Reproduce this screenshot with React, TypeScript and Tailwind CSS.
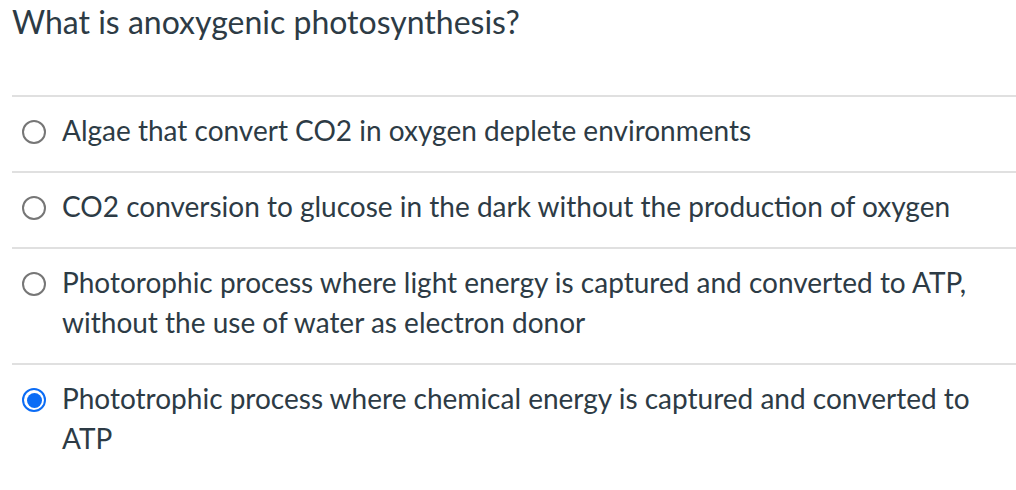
import React from "react";

const options = [
  "Algae that convert CO2 in oxygen deplete environments",
  "CO2 conversion to glucose in the dark without the production of oxygen",
  "Photorophic process where light energy is captured and converted to ATP, without the use of water as electron donor",
  "Phototrophic process where chemical energy is captured and converted to ATP",
];

function Radio({ checked }: { checked: boolean }) {
  if (checked) {
    return (
      <span className="mt-[10px] flex h-[24px] w-[24px] shrink-0 items-center justify-center rounded-full border-[2px] border-[#0b6cf5]">
        <span className="h-[15px] w-[15px] rounded-full bg-[#0b6cf5]" />
      </span>
    );
  }
  return <span className="mt-[10px] h-[24px] w-[24px] shrink-0 rounded-full border-[2px] border-[#767676]" />;
}

export default function App() {
  const selected = 3;
  return (
    <div className="h-[490px] w-[1016px] overflow-hidden bg-white pl-[12px] text-[#2d3b45]" style={{ fontFamily: "Lato, 'Noto Sans', sans-serif" }}>
      <h1 className="pt-[2px] text-[32px] leading-[40px] font-normal">What is anoxygenic photosynthesis?</h1>
      <div className="mt-[53px]">
        {options.map((text, i) => (
          <div key={i} className="flex gap-[16px] border-t-[2px] border-[#e0e0e0] pt-[13px] pb-[21px] pl-[10px] pr-[30px]">
            <Radio checked={i === selected} />
            <span className="text-[28px] leading-[40px]">{text}</span>
          </div>
        ))}
      </div>
    </div>
  );
}
